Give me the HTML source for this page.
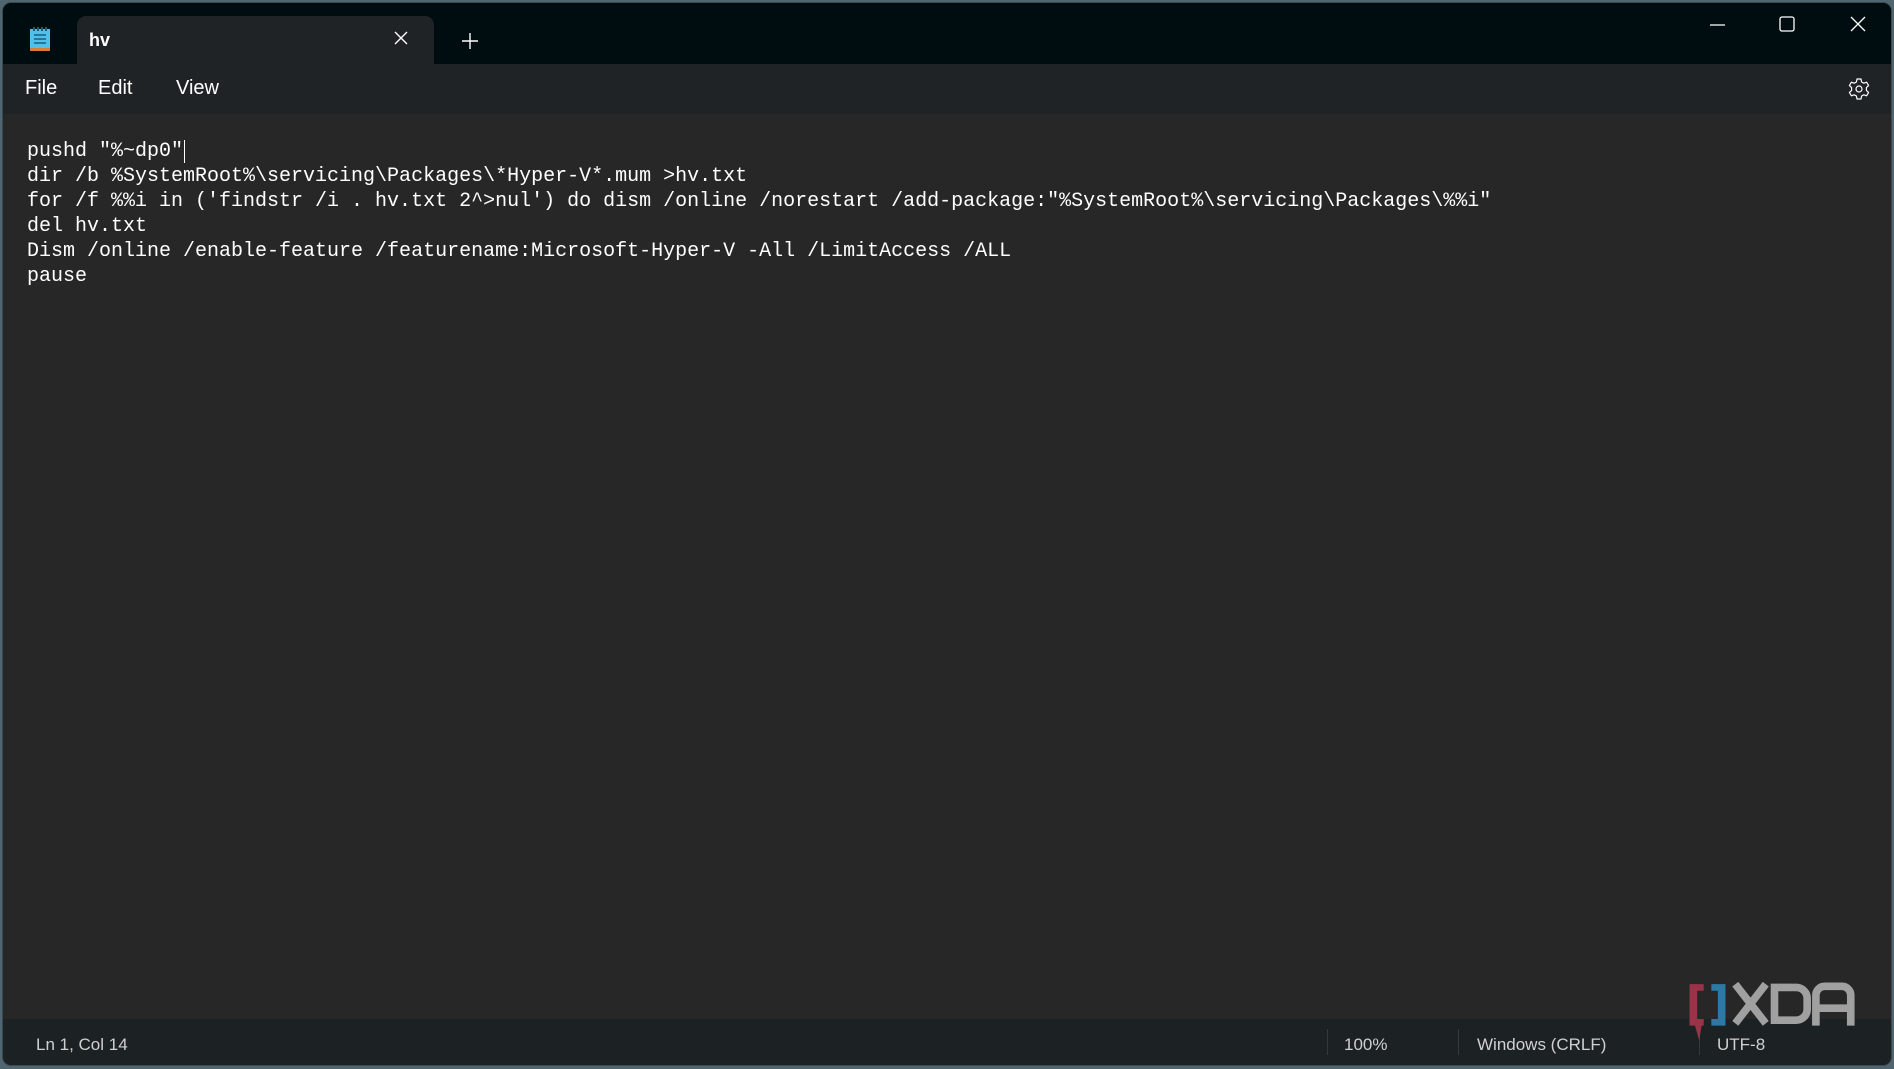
<!DOCTYPE html>
<html><head><meta charset="utf-8"><style>
*{margin:0;padding:0;box-sizing:border-box}
body{width:1894px;height:1069px;background:#4f6671;overflow:hidden;font-family:"Liberation Sans",sans-serif;position:relative}
.win{position:absolute;left:2px;top:2px;width:1890px;height:1064px;border-radius:9px;overflow:hidden;background:#272727;border:1px solid #3a4a50}
.title{position:absolute;left:0;top:0;width:100%;height:61px;background:#000d10}
.tab{position:absolute;left:74px;top:13px;width:357px;height:49px;background:#1f2325;border-radius:9px 9px 0 0}
.menu{position:absolute;left:0;top:61px;width:100%;height:50px;background:#1f2325;color:#fff;font-size:20px}
.menu span{position:absolute;top:13px}
.ed{position:absolute;left:24px;top:136px;font-family:"Liberation Mono",monospace;font-size:20px;line-height:25px;color:#fff;white-space:pre}
.status{position:absolute;left:0;top:1016px;width:100%;height:48px;background:#1c2123;color:#d0d0d0;font-size:17px}
.status span{position:absolute;top:16px}
.sep{position:absolute;top:10px;width:1px;height:26px;background:#333a3d}
</style></head><body>
<div class="win">
<div class="title">
<svg style="position:absolute;left:27px;top:24px" width="20" height="25" viewBox="0 0 20 25"><rect x="0" y="2" width="20" height="21" fill="#4fc1e9"/><rect x="0" y="21" width="20" height="3" fill="#d97b3a"/><g stroke="#1a5f80" stroke-width="1.6"><line x1="4" y1="8" x2="16" y2="8"/><line x1="4" y1="12" x2="16" y2="12"/><line x1="4" y1="16" x2="16" y2="16"/></g><g fill="#1a5f80"><rect x="3" y="0" width="2" height="4"/><rect x="7" y="0" width="2" height="4"/><rect x="11" y="0" width="2" height="4"/><rect x="15" y="0" width="2" height="4"/></g></svg>
<div class="tab"><span style="position:absolute;left:12px;top:14px;color:#fff;font-weight:bold;font-size:18px">hv</span>
<svg style="position:absolute;left:317px;top:15px" width="14" height="14"><path d="M1 1L13 13M13 1L1 13" stroke="#fff" stroke-width="1.4"/></svg></div>
<svg style="position:absolute;left:459px;top:30px" width="16" height="16"><path d="M8 0V16M0 8H16" stroke="#fff" stroke-width="1.4"/></svg>
<svg style="position:absolute;left:1707px;top:20px" width="16" height="4"><path d="M0 2H15" stroke="#fff" stroke-width="1.2"/></svg>
<svg style="position:absolute;left:1776px;top:13px" width="16" height="16"><rect x="1" y="1" width="14" height="14" rx="2" fill="none" stroke="#fff" stroke-width="1.3"/></svg>
<svg style="position:absolute;left:1847px;top:13px" width="16" height="16"><path d="M1 1L15 15M15 1L1 15" stroke="#fff" stroke-width="1.3"/></svg>
</div>
<div class="menu"><span style="left:22px">File</span><span style="left:95px">Edit</span><span style="left:173px">View</span>
<svg style="position:absolute;left:1844px;top:13px" width="24" height="24" viewBox="0 0 24 24"><path d="M10 2h4l.6 3 2.2 1.2 2.8-1 2 3.4-2.2 2v2.8l2.2 2-2 3.4-2.8-1-2.2 1.2-.6 3h-4l-.6-3-2.2-1.2-2.8 1-2-3.4 2.2-2v-2.8l-2.2-2 2-3.4 2.8 1L9.4 5z" fill="none" stroke="#fff" stroke-width="1.2" stroke-linejoin="round"/><circle cx="12" cy="12" r="3" fill="none" stroke="#fff" stroke-width="1.2"/></svg></div>
<div class="ed">pushd "%~dp0"<span style="border-left:1px solid #fff;margin-left:1px"></span>
dir /b %SystemRoot%\servicing\Packages\*Hyper-V*.mum &gt;hv.txt
for /f %%i in ('findstr /i . hv.txt 2^&gt;nul') do dism /online /norestart /add-package:"%SystemRoot%\servicing\Packages\%%i"
del hv.txt
Dism /online /enable-feature /featurename:Microsoft-Hyper-V -All /LimitAccess /ALL
pause</div>
<div class="status"><span style="left:33px">Ln 1, Col 14</span>
<div class="sep" style="left:1324px"></div><span style="left:1341px">100%</span>
<div class="sep" style="left:1455px"></div><span style="left:1474px">Windows (CRLF)</span>
<div class="sep" style="left:1696px"></div><span style="left:1714px">UTF-8</span></div>
<svg style="position:absolute;left:1684px;top:979px" width="175" height="61" viewBox="0 0 160 56"><path d="M2 2h13v6h-6v26h6v6h-2l-2 14-4-14h-5z" fill="#9a3348"/><path d="M22 2h13v38h-13v-6h6v-26h-6z" fill="#2b7aa5"/><g fill="none" stroke="#a0a0a0" stroke-width="7"><path d="M44 2l28 36M72 2l-28 36"/><path d="M80 5h20a10 10 0 0 1 10 10v10a10 10 0 0 1-10 10h-20z"/><path d="M118 40v-28a8 8 0 0 1 8-8h16a8 8 0 0 1 8 8v28M118 24h32"/></g></svg>
</div>
</body></html>
